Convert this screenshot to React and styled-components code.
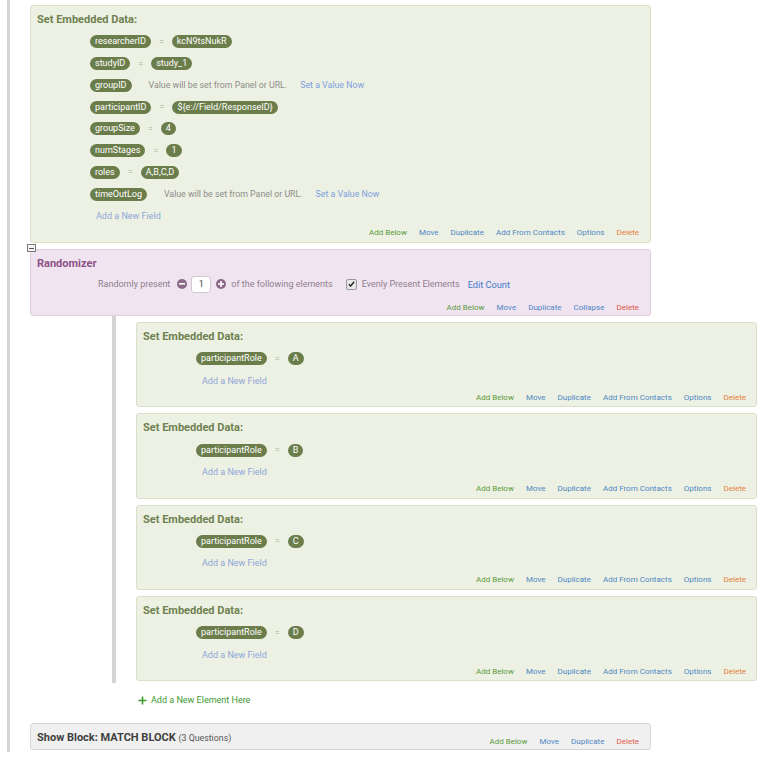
import React from 'react';
import styled, { createGlobalStyle } from 'styled-components';

const GlobalStyle = createGlobalStyle`
  body {
    margin: 0;
    background: #ffffff;
    font-family: Roboto, "Liberation Sans", sans-serif;
  }
`;

const Page = styled.div`
  display: flex;
  padding-left: 7px;
  min-height: 752px;
`;

const Rail = styled.div`
  width: ${props => props.width || 3}px;
  background: #d4d4d4;
  flex-shrink: 0;
`;

const Main = styled.div`
  margin-left: 20px;
  padding-top: 5px;
  display: flex;
  flex-direction: column;
  width: 727px;
`;

const Block = styled.div`
  position: relative;
  box-sizing: border-box;
  width: 621px;
  border: 1px solid ${props => props.border};
  background: ${props => props.bg};
  border-radius: 3px;
  padding: 6px 6px ${props => (props.bottom != null ? props.bottom : 3)}px 6px;
  margin-top: ${props => props.top || 0}px;
`;

const Title = styled.div`
  font-size: 11px;
  line-height: 16px;
  font-weight: 700;
  color: ${props => props.color};
  margin-bottom: ${props => props.gap || 0}px;
`;

const FieldRow = styled.div`
  display: flex;
  align-items: center;
  height: 21.75px;
  padding-left: 53px;
`;

const Pill = styled.span`
  display: inline-block;
  height: 13px;
  line-height: 13px;
  padding: 0 5px;
  border-radius: 7px;
  background: #6b7d4b;
  color: #ffffff;
  font-size: 9px;
  white-space: nowrap;
`;

const Equals = styled.span`
  margin: 0 8px;
  font-size: 9px;
  color: #a3ae8c;
`;

const Hint = styled.span`
  margin-left: 17px;
  font-size: 8.8px;
  color: #8d8d8d;
`;

const SetValue = styled.span`
  margin-left: 13px;
  font-size: 8.8px;
  color: #7d9fe0;
`;

const AddField = styled.div`
  height: 22px;
  line-height: 22px;
  padding-left: 59px;
  font-size: 9px;
  color: #8ea5da;
`;

const Actions = styled.div`
  display: flex;
  justify-content: flex-end;
  gap: 12px;
  height: 12px;
  line-height: 12px;
  padding-right: ${props => props.right || 5}px;
  margin-top: ${props => props.top || 0}px;
  margin-bottom: ${props => props.bottom || 0}px;
  align-self: ${props => props.align || 'auto'};
`;

const actionColors = {
  add: '#5b9a3c',
  link: '#4d87c4',
  del: '#e05a48',
  warn: '#e57d40',
};

const Action = styled.span`
  font-size: 8px;
  color: ${props => actionColors[props.kind] || actionColors.link};
  white-space: nowrap;
`;

const CollapseBox = styled.div`
  position: absolute;
  top: -6px;
  left: -4px;
  width: 7px;
  height: 6px;
  border: 1px solid #7a7a7a;
  background: #f4f4f4;
  display: flex;
  align-items: center;
  justify-content: center;
  &::after {
    content: '';
    width: 5px;
    height: 1px;
    background: #555;
  }
`;

const RandomRow = styled.div`
  display: flex;
  align-items: center;
  height: 20px;
  margin-top: 2px;
  padding-left: 61px;
  font-size: 9px;
  color: #8f7f8d;
`;

const RoundBtn = styled.span`
  width: 10px;
  height: 10px;
  border-radius: 50%;
  background: #8a6a86;
  display: inline-flex;
  align-items: center;
  justify-content: center;
  margin: ${props => props.margin};
`;

const CountInput = styled.span`
  box-sizing: border-box;
  width: 20px;
  height: 17px;
  border: 1px solid #d2c8d2;
  border-radius: 3px;
  background: #ffffff;
  display: inline-flex;
  align-items: center;
  justify-content: center;
  color: #444;
  font-size: 9px;
`;

const Check = styled.span`
  box-sizing: border-box;
  width: 11px;
  height: 11px;
  border: 1px solid #999;
  border-radius: 2px;
  background: #e8e8e8;
  display: inline-flex;
  align-items: center;
  justify-content: center;
  margin: 0 5px 0 13px;
`;

const EditCount = styled.span`
  margin-left: 8px;
  color: #3c7cc8;
  font-size: 9.2px;
`;

const Nested = styled.div`
  display: flex;
  padding-left: 82px;
`;

const NestedList = styled.div`
  margin-left: 20px;
  padding: 6px 0 2px;
  display: flex;
  flex-direction: column;
  gap: 6px;
`;

const AddElement = styled.div`
  display: flex;
  align-items: center;
  gap: 4px;
  margin-top: 11px;
  padding-left: 108px;
  height: 12px;
  font-size: 9px;
  color: #3e9a2f;
`;

const ShowBlock = styled(Block)`
  display: flex;
  justify-content: space-between;
  height: 27px;
  padding: 0 6px 0 6px;
  margin-top: 17px;
`;

const ShowTitle = styled.div`
  padding-top: 6px;
  font-size: 11px;
  line-height: 16px;
  font-weight: 700;
  color: #404040;
  & small {
    font-size: 8.8px;
    font-weight: 400;
    color: #555;
  }
`;

const GREEN = { bg: '#edf1e3', border: '#d9dfca', title: '#6e8150' };

const topFields = [
  { key: 'researcherID', value: 'kcN9tsNukR' },
  { key: 'studyID', value: 'study_1' },
  { key: 'groupID' },
  { key: 'participantID', value: '${e://Field/ResponseID}' },
  { key: 'groupSize', value: '4' },
  { key: 'numStages', value: '1' },
  { key: 'roles', value: 'A,B,C,D' },
  { key: 'timeOutLog' },
];

const EmbeddedActions = ({ right, del }) => (
  <Actions right={right}>
    <Action kind="add">Add Below</Action>
    <Action>Move</Action>
    <Action>Duplicate</Action>
    <Action>Add From Contacts</Action>
    <Action>Options</Action>
    <Action kind={del}>Delete</Action>
  </Actions>
);

const EmbeddedBlock = ({ fields, right, bottom, del }) => (
  <Block bg={GREEN.bg} border={GREEN.border} bottom={bottom}>
    <Title color={GREEN.title} gap={3}>Set Embedded Data:</Title>
    {fields.map(f => (
      <FieldRow key={f.key}>
        <Pill>{f.key}</Pill>
        {f.value ? (
          <>
            <Equals>=</Equals>
            <Pill>{f.value}</Pill>
          </>
        ) : (
          <>
            <Hint>Value will be set from Panel or URL.</Hint>
            <SetValue>Set a Value Now</SetValue>
          </>
        )}
      </FieldRow>
    ))}
    <AddField>Add a New Field</AddField>
    <EmbeddedActions right={right} del={del} />
  </Block>
);

const PlusIcon = () => (
  <svg width="9" height="9" viewBox="0 0 9 9">
    <path d="M4.5 0.5v8M0.5 4.5h8" stroke="#3e9a2f" strokeWidth="1.6" />
  </svg>
);

const App = () => {
  return (
    <>
      <GlobalStyle />
      <Page>
        <Rail />
        <Main>
          <EmbeddedBlock fields={topFields} right={5} del="warn" />

          <Block bg="#f1e4f1" border="#e0cbe0" top={6} bottom={1}>
            <CollapseBox />
            <Title color="#8c5187">Randomizer</Title>
            <RandomRow>
              Randomly present
              <RoundBtn margin="0 4px 0 7px">
                <svg width="6" height="2" viewBox="0 0 6 2"><rect width="6" height="1.6" fill="#fff" /></svg>
              </RoundBtn>
              <CountInput>1</CountInput>
              <RoundBtn margin="0 5px 0 5px">
                <svg width="6" height="6" viewBox="0 0 6 6"><path d="M3 0v6M0 3h6" stroke="#fff" strokeWidth="1.6" /></svg>
              </RoundBtn>
              of the following elements
              <Check>
                <svg width="7" height="6" viewBox="0 0 7 6"><path d="M0.8 3.2l1.8 1.8L6.2 0.8" stroke="#222" strokeWidth="1.4" fill="none" /></svg>
              </Check>
              Evenly Present Elements
              <EditCount>Edit Count</EditCount>
            </RandomRow>
            <Actions top={8} right={0}>
              <Action kind="add">Add Below</Action>
              <Action>Move</Action>
              <Action>Duplicate</Action>
              <Action>Collapse</Action>
              <Action kind="del">Delete</Action>
            </Actions>
          </Block>

          <Nested>
            <Rail width={4} />
            <NestedList>
              {['A', 'B', 'C', 'D'].map(role => (
                <EmbeddedBlock
                  key={role}
                  fields={[{ key: 'participantRole', value: role }]}
                  right={4}
                  bottom={2.5}
                  del="warn"
                />
              ))}
            </NestedList>
          </Nested>

          <AddElement>
            <PlusIcon />
            Add a New Element Here
          </AddElement>

          <ShowBlock bg="#f0f0f0" border="#d6d6d6">
            <ShowTitle>
              Show Block: MATCH BLOCK <small>(3 Questions)</small>
            </ShowTitle>
            <Actions align="flex-end" right={0} bottom={1}>
              <Action kind="add">Add Below</Action>
              <Action>Move</Action>
              <Action>Duplicate</Action>
              <Action kind="del">Delete</Action>
            </Actions>
          </ShowBlock>
        </Main>
      </Page>
    </>
  );
};

export default App;
